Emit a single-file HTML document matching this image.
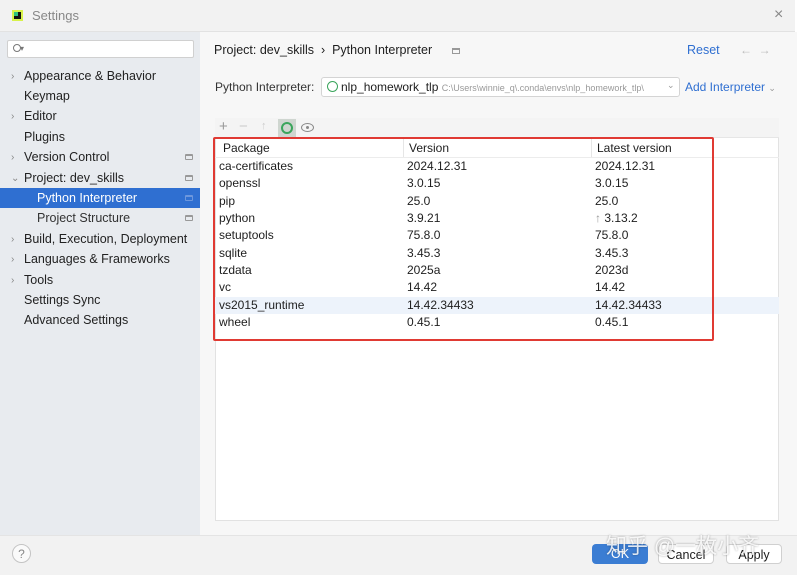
<!DOCTYPE html>
<html><head><meta charset="utf-8"><style>
*{margin:0;padding:0;box-sizing:border-box}
body{width:797px;height:574px;overflow:hidden;background:#fff;font-family:"Liberation Sans","Noto Sans CJK SC",sans-serif;font-size:12px;color:#1e1e1e;position:relative}
.abs{position:absolute}
.win{left:0;top:0;width:795px;height:572px;background:#f2f2f2;border:1px solid #c8c8c8;border-radius:6px;overflow:hidden}
.title{left:0;top:0;width:795px;height:32px;background:#f2f2f2;border-bottom:1px solid #e2e2e2}
.side{left:0;top:32px;width:200px;height:503px;background:#e8ebef}
.content{left:200px;top:32px;width:597px;height:503px;background:#f7f7f7}
.bottom{left:0;top:535px;width:797px;height:40px;background:#f2f2f2;border-top:1px solid #e4e4e4}
.nav{left:0;width:200px;height:20px;line-height:20px;font-size:12.5px;color:#222}
.nav .t{position:absolute;left:24px}
.nav .ch{position:absolute;left:11px;top:1px;color:#888;font-size:10px}
.sq{position:absolute;left:185px;top:7px;width:8px;height:6px;border:1px solid #999;border-top-width:2px;border-radius:1px}
.row{left:215px;width:564px;height:17.33px;line-height:17.33px;font-size:12px}
.row span{position:absolute}
.c1{left:4px}.c2{left:192px}.c3{left:380px}
.btn{height:20px;top:544px;border-radius:4px;text-align:center;line-height:20px;font-size:12.5px}
</style></head><body>
<div class="abs win"></div>
<div class="abs title">
  <div class="abs" style="left:12px;top:10px;width:11px;height:11px;background:#111;border:2px solid #d8f24a"></div>
  <div class="abs" style="left:14px;top:12px;width:4px;height:4px;background:#2ec27e"></div>
  <div class="abs" style="left:32px;top:8px;font-size:13px;color:#888">Settings</div>
  <div class="abs" style="left:774px;top:6px;font-size:16px;color:#888">×</div>
</div>
<div class="abs side"></div>
<div class="abs" style="left:7px;top:40px;width:187px;height:18px;background:#fff;border:1px solid #d0d0d0;border-radius:2px"></div>
<div class="abs" style="left:13px;top:44px;width:8px;height:8px;border:1px solid #777;border-radius:50%"></div>
<div class="abs" style="left:20px;top:44px;font-size:8px;color:#777">▾</div>

<div class="abs nav" style="top:66px"><span class="ch">›</span><span class="t">Appearance &amp; Behavior</span></div>
<div class="abs nav" style="top:86px"><span class="t">Keymap</span></div>
<div class="abs nav" style="top:106px"><span class="ch">›</span><span class="t">Editor</span></div>
<div class="abs nav" style="top:127px"><span class="t">Plugins</span></div>
<div class="abs nav" style="top:147px"><span class="ch">›</span><span class="t">Version Control</span><span class="sq"></span></div>
<div class="abs nav" style="top:168px"><span class="ch">⌄</span><span class="t">Project: dev_skills</span><span class="sq"></span></div>
<div class="abs nav" style="top:188px;background:#2f6fd1;color:#fff"><span class="t" style="left:37px">Python Interpreter</span><span class="sq" style="border-color:#6d97dd"></span></div>
<div class="abs nav" style="top:208px"><span class="t" style="left:37px;color:#333">Project Structure</span><span class="sq"></span></div>
<div class="abs nav" style="top:229px"><span class="ch">›</span><span class="t">Build, Execution, Deployment</span></div>
<div class="abs nav" style="top:249px"><span class="ch">›</span><span class="t">Languages &amp; Frameworks</span></div>
<div class="abs nav" style="top:270px"><span class="ch">›</span><span class="t">Tools</span></div>
<div class="abs nav" style="top:290px"><span class="t">Settings Sync</span></div>
<div class="abs nav" style="top:310px"><span class="t">Advanced Settings</span></div>

<div class="abs content"></div>
<div class="abs" style="left:214px;top:43px;font-size:12.5px">Project: dev_skills &nbsp;›&nbsp; Python Interpreter</div>
<div class="abs" style="left:452px;top:48px;width:8px;height:6px;border:1px solid #999;border-top-width:2px"></div>
<div class="abs" style="left:687px;top:43px;font-size:12.5px;color:#2f6fd1">Reset</div>
<div class="abs" style="left:740px;top:43px;font-size:12px;color:#bbb">←&nbsp;&nbsp;→</div>

<div class="abs" style="left:215px;top:80px;font-size:12px;color:#333">Python Interpreter:</div>
<div class="abs" style="left:321px;top:77px;width:359px;height:20px;background:#fff;border:1px solid #d4d4d4;border-radius:3px"></div>
<div class="abs" style="left:327px;top:81px;width:11px;height:11px;border:1.5px solid #3ba55c;border-radius:50%"></div>
<div class="abs" style="left:341px;top:80px;font-size:12px">nlp_homework_tlp <span style="font-size:9px;color:#999">C:\Users\winnie_q\.conda\envs\nlp_homework_tlp\</span></div>
<div class="abs" style="left:667px;top:80px;font-size:9px;color:#999">⌄</div>
<div class="abs" style="left:685px;top:80px;font-size:12px;color:#2f6fd1">Add Interpreter <span style="color:#999;font-size:9px">⌄</span></div>

<div class="abs" style="left:215px;top:118px;width:564px;height:403px;background:#fff;border:1px solid #e2e2e2"></div>
<div class="abs" style="left:215px;top:118px;width:564px;height:20px;background:#f4f4f4;border-bottom:1px solid #e6e6e6"></div>
<div class="abs" style="left:219px;top:118px;font-size:15px;color:#999">+</div>
<div class="abs" style="left:239px;top:118px;font-size:15px;color:#ccc">−</div>
<div class="abs" style="left:261px;top:120px;font-size:11px;color:#ccc">↑</div>
<div class="abs" style="left:278px;top:119px;width:18px;height:18px;background:#cfd6d0"></div>
<div class="abs" style="left:281px;top:122px;width:12px;height:12px;border:2px solid #3ba55c;border-radius:50%"></div>
<div class="abs" style="left:301px;top:123px;width:13px;height:9px;border:1px solid #888;border-radius:50%"></div>
<div class="abs" style="left:306px;top:126px;width:3px;height:3px;background:#888;border-radius:50%"></div>

<div class="abs row" style="top:139px;height:19px;line-height:19px;border-bottom:1px solid #ececec"><span class="c1" style="left:8px">Package</span><span class="c2" style="left:194px">Version</span><span class="c3" style="left:382px">Latest version</span></div>
<div class="abs" style="left:403px;top:138px;width:1px;height:19px;background:#e6e6e6"></div>
<div class="abs" style="left:591px;top:138px;width:1px;height:19px;background:#e6e6e6"></div>

<div class="abs row" style="top:158px"><span class="c1">ca-certificates</span><span class="c2">2024.12.31</span><span class="c3">2024.12.31</span></div>
<div class="abs row" style="top:175.3px"><span class="c1">openssl</span><span class="c2">3.0.15</span><span class="c3">3.0.15</span></div>
<div class="abs row" style="top:192.7px"><span class="c1">pip</span><span class="c2">25.0</span><span class="c3">25.0</span></div>
<div class="abs row" style="top:210px"><span class="c1">python</span><span class="c2">3.9.21</span><span class="c3"><span style="position:static;color:#999">↑</span> 3.13.2</span></div>
<div class="abs row" style="top:227.3px"><span class="c1">setuptools</span><span class="c2">75.8.0</span><span class="c3">75.8.0</span></div>
<div class="abs row" style="top:244.7px"><span class="c1">sqlite</span><span class="c2">3.45.3</span><span class="c3">3.45.3</span></div>
<div class="abs row" style="top:262px"><span class="c1">tzdata</span><span class="c2">2025a</span><span class="c3">2023d</span></div>
<div class="abs row" style="top:279.3px"><span class="c1">vc</span><span class="c2">14.42</span><span class="c3">14.42</span></div>
<div class="abs row" style="top:296.7px;background:#edf3fb"><span class="c1">vs2015_runtime</span><span class="c2">14.42.34433</span><span class="c3">14.42.34433</span></div>
<div class="abs row" style="top:314px"><span class="c1">wheel</span><span class="c2">0.45.1</span><span class="c3">0.45.1</span></div>

<div class="abs" style="left:213px;top:137px;width:501px;height:204px;border:2px solid #e03a33;border-radius:2px"></div>

<div class="abs bottom"></div>
<div class="abs" style="left:12px;top:544px;width:19px;height:19px;border:1px solid #c4c4c4;border-radius:50%;background:#fafafa;text-align:center;line-height:18px;color:#888;font-size:12px">?</div>
<div class="abs btn" style="left:592px;width:56px;background:#3b7dd3;color:#fff">OK</div>
<div class="abs btn" style="left:658px;width:56px;background:#fff;border:1px solid #d0d0d0">Cancel</div>
<div class="abs btn" style="left:726px;width:56px;background:#fff;border:1px solid #d0d0d0">Apply</div>
<div class="abs" style="left:606px;top:530px;font-size:21px;color:rgba(255,255,255,0.85);text-shadow:0 0 2px rgba(0,0,0,0.35);white-space:nowrap">知乎 @一枚小齐</div>
</body></html>
